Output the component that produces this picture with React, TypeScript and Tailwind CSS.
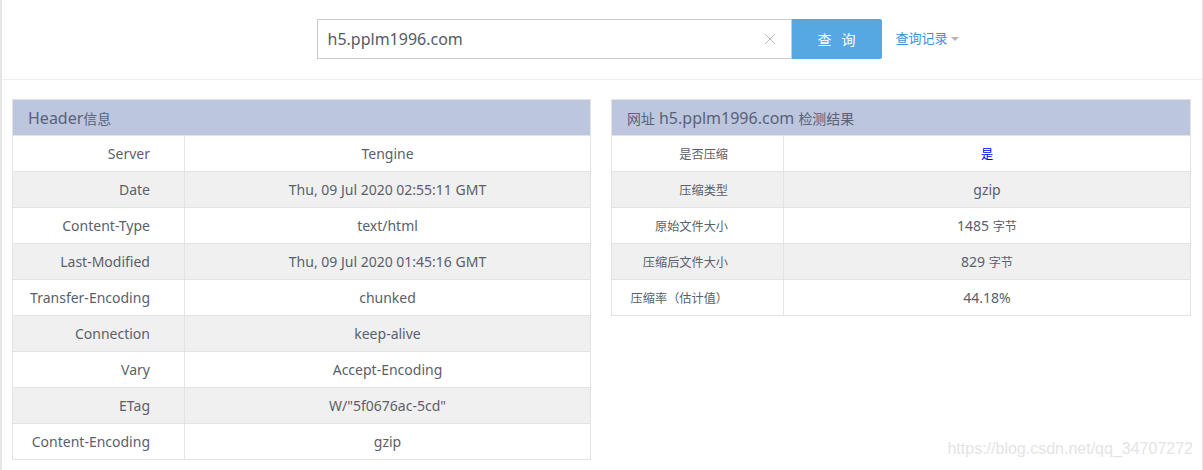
import { X } from "lucide-react";

const font = { fontFamily: '"Microsoft YaHei", "Noto Sans", "Noto Sans CJK SC", sans-serif' };

const headers: [string, string][] = [
  ["Server", "Tengine"],
  ["Date", "Thu, 09 Jul 2020 02:55:11 GMT"],
  ["Content-Type", "text/html"],
  ["Last-Modified", "Thu, 09 Jul 2020 01:45:16 GMT"],
  ["Transfer-Encoding", "chunked"],
  ["Connection", "keep-alive"],
  ["Vary", "Accept-Encoding"],
  ["ETag", 'W/"5f0676ac-5cd"'],
  ["Content-Encoding", "gzip"],
];

const result: [string, string][] = [
  ["是否压缩", "是"],
  ["压缩类型", "gzip"],
  ["原始文件大小", "1485 字节"],
  ["压缩后文件大小", "829 字节"],
  ["压缩率（估计值）", "44.18%"],
];

// the CJK glyphs in the screenshot render a little smaller than the latin text
function Txt({ s }: { s: string }) {
  const parts = s.split(/([\u3000-\u9fff\uff00-\uffef]+)/);
  return (
    <>
      {parts.map((p, i) =>
        i % 2 === 1 ? (
          <span key={i} className="text-[0.87em]">
            {p}
          </span>
        ) : (
          p
        )
      )}
    </>
  );
}

function InfoTable({
  title,
  rows,
  labelPad,
  width,
}: {
  title: string;
  rows: [string, string][];
  labelPad: string;
  width: string;
}) {
  return (
    <table className={`${width} border-collapse border border-[#e3e3e3] text-[14px] text-[#5a5f6b]`}>
      <thead>
        <tr className="h-[36px] bg-[#bcc6dd]">
          <th colSpan={2} className="pl-[15px] text-left text-[16px] font-normal text-[#58627a]">
            <Txt s={title} />
          </th>
        </tr>
      </thead>
      <tbody>
        {rows.map(([k, v], i) => (
          <tr key={k} className={`h-[36px] ${i % 2 === 1 ? "bg-[#f0f0f0]" : "bg-white"}`}>
            <td className={`w-[172px] border border-[#e3e3e3] text-right ${labelPad}`}>
              <Txt s={k} />
            </td>
            <td className={`border border-[#e3e3e3] text-center ${v === "是" ? "text-[#0000ff]" : ""}`}>
              <Txt s={v} />
            </td>
          </tr>
        ))}
      </tbody>
    </table>
  );
}

export default function App() {
  return (
    <div
      className="relative h-[470px] w-[1203px] overflow-hidden border-l-2 border-r border-l-[#e6e6e6] border-r-[#e6e6e6] bg-white"
      style={font}
    >
      <div className="grid h-[80px] grid-cols-[1fr_auto_1fr] items-start border-b border-[#eeeeee] pr-[6px] pt-[19px]">
        <div />
        <div className="flex h-[40px]">
          <div className="flex w-[475px] items-center border border-[#c6ccd8] pl-[10px] pr-[12px]">
            <span className="flex-1 text-[16px] text-[#555b66]">h5.pplm1996.com</span>
            <X className="h-[18px] w-[18px] text-[#b0b0b0]" strokeWidth={1.2} />
          </div>
          <button
            type="button"
            className="w-[90px] rounded-r-[2px] bg-[#56a8e3] text-[14px] tracking-[10px] text-white"
          >
            <span className="pl-[10px]">查询</span>
          </button>
        </div>
        <div className="flex h-[40px] items-center pl-[14px] text-[13px] text-[#3d8fe2]">
          查询记录
          <span className="ml-[3px] border-x-[4px] border-t-[4px] border-x-transparent border-t-[#b5b5b5]" />
        </div>
      </div>

      <div className="flex items-start gap-[20px] pl-[10px] pt-[19px]">
        <InfoTable title="Header信息" rows={headers} labelPad="pr-[34px]" width="w-[579px]" />
        <InfoTable title="网址 h5.pplm1996.com 检测结果" rows={result} labelPad="pr-[55px]" width="w-[580px]" />
      </div>

      <div
        className="absolute bottom-[9px] right-[9px] text-[16px] text-[#e4e4e4]"
        style={{ fontFamily: '"Liberation Sans", Arial, sans-serif' }}
      >
        https://blog.csdn.net/qq_34707272
      </div>
    </div>
  );
}
